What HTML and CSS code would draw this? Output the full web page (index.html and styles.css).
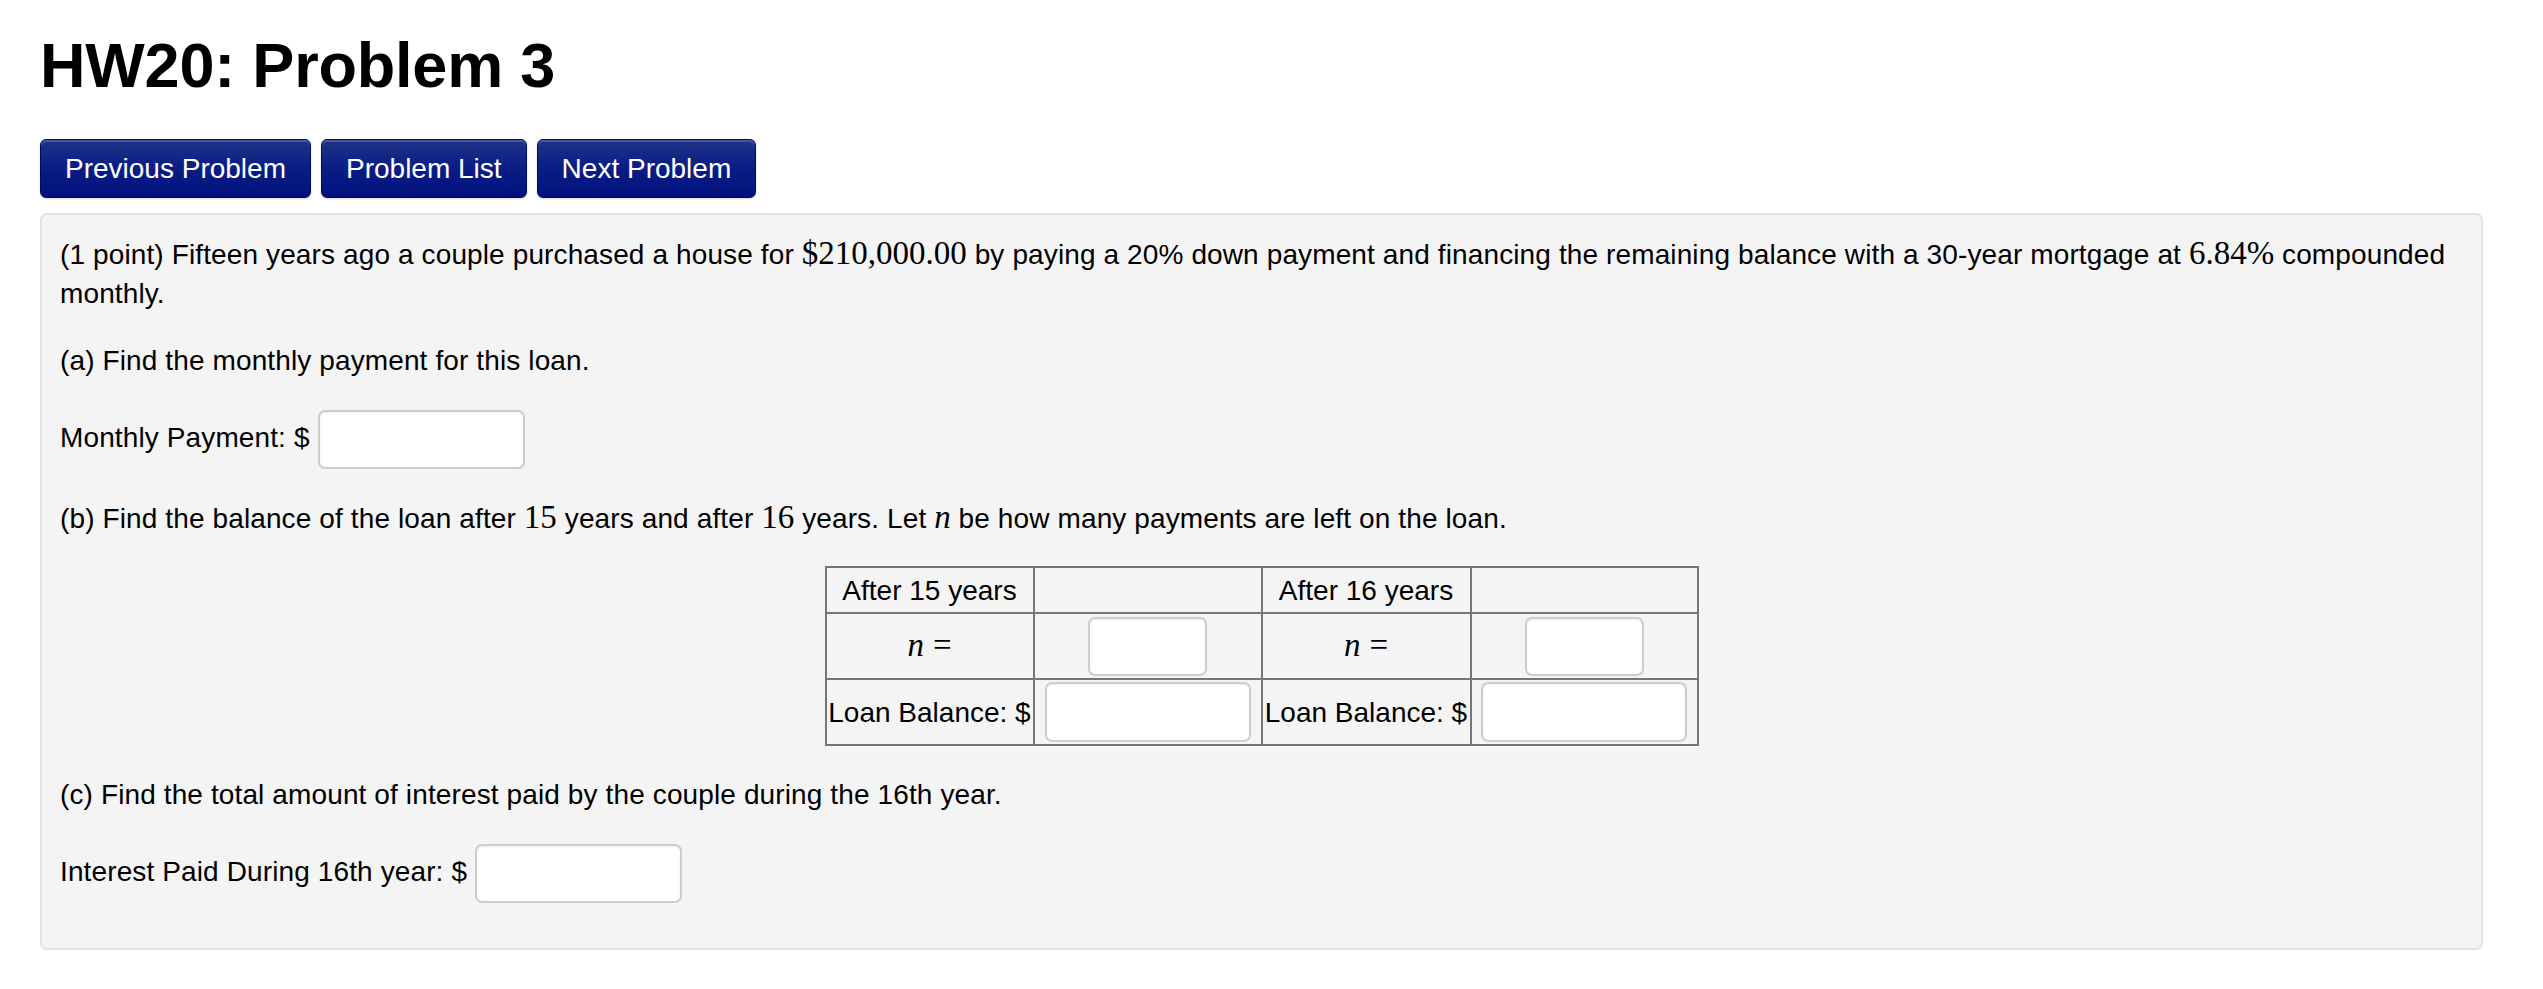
FILE: index.html
```html
<!DOCTYPE html>
<html lang="en">
<head>
<meta charset="utf-8">
<title>HW20: Problem 3</title>
<link rel="stylesheet" href="styles.css">
</head>
<body>
<div class="page">
  <h1 class="title">HW20: Problem 3</h1>
  <div class="nav">
    <a class="btn" href="#">Previous Problem</a>
    <a class="btn" href="#">Problem List</a>
    <a class="btn" href="#">Next Problem</a>
  </div>
  <div class="panel">
    <p>(1 point) Fifteen years ago a couple purchased a house for <span class="math">$210,000.00</span> by paying a 20% down payment and financing the remaining balance with a 30-year mortgage at <span class="math">6.84%</span> compounded monthly.</p>
    <p>(a) Find the monthly payment for this loan.</p>
    <p>Monthly Payment: $ <input class="ans" type="text"></p>
    <p>(b) Find the balance of the loan after <span class="math">15</span> years and after <span class="math">16</span> years. Let <span class="math"><i>n</i></span> be how many payments are left on the loan.</p>
    <table class="grid">
      <colgroup>
        <col class="c-label">
        <col class="c-input">
        <col class="c-label2">
        <col class="c-input2">
      </colgroup>
      <tr class="r-head">
        <td>After 15 years</td>
        <td></td>
        <td>After 16 years</td>
        <td></td>
      </tr>
      <tr class="r-n">
        <td><span class="math"><i>n</i><span class="eq">=</span></span></td>
        <td><input class="ans ans-small" type="text"></td>
        <td><span class="math"><i>n</i><span class="eq">=</span></span></td>
        <td><input class="ans ans-small" type="text"></td>
      </tr>
      <tr class="r-bal">
        <td>Loan Balance: $</td>
        <td><input class="ans" type="text"></td>
        <td>Loan Balance: $</td>
        <td><input class="ans" type="text"></td>
      </tr>
    </table>
    <p>(c) Find the total amount of interest paid by the couple during the 16th year.</p>
    <p>Interest Paid During 16th year: $ <input class="ans" type="text"></p>
  </div>
</div>
</body>
</html>
```
FILE: styles.css
```css
html, body {
  margin: 0;
  padding: 0;
  background: #ffffff;
}

body {
  font-family: "Liberation Sans", Arial, Helvetica, sans-serif;
  font-size: 28px;
  color: #000000;
}

.page {
  padding: 0 60px 0 40px;
}

.title {
  margin: 28px 0 0;
  font-size: 63px;
  line-height: 74px;
  font-weight: bold;
  letter-spacing: -0.2px;
}

.nav {
  display: flex;
  gap: 10px;
  margin-top: 37px;
}

.btn {
  display: flex;
  align-items: center;
  box-sizing: border-box;
  height: 59px;
  padding: 0 24px;
  border: 1px solid #000c6b;
  border-radius: 6px;
  background: linear-gradient(to bottom, #1f3388 0%, #0b1f84 45%, #00107e 100%);
  box-shadow: inset 0 2px 0 rgba(255, 255, 255, 0.18), 0 1px 2px rgba(0, 0, 0, 0.15);
  color: #ffffff;
  font-size: 28px;
  text-decoration: none;
  white-space: nowrap;
}

.panel {
  margin-top: 15px;
  box-sizing: border-box;
  border: 2px solid #e3e3e3;
  border-radius: 7px;
  background: #f4f4f4;
  padding: 20px 18px 15px;
  letter-spacing: 0.12px;
}

.panel p {
  margin: 0 0 28px;
  line-height: 39px;
}

.math {
  font-family: "Liberation Serif", "Times New Roman", serif;
  font-size: 33px;
  line-height: 1;
  letter-spacing: 0;
}

.math i {
  font-style: italic;
}

.eq {
  margin-left: 9px;
}

.ans {
  box-sizing: border-box;
  width: 207px;
  height: 59px;
  margin: 2px 0;
  padding: 0 8px;
  border: 2px solid #cdcdcd;
  border-radius: 7px;
  background: #ffffff;
  box-shadow: inset 0 1px 2px rgba(0, 0, 0, 0.08);
  vertical-align: middle;
  font-size: 28px;
  font-family: inherit;
}

.ans-small {
  width: 119px;
}

.grid {
  margin: 28px auto 29px;
  border-collapse: collapse;
  table-layout: fixed;
  width: 872px;
}

.c-label { width: 208px; }
.c-input { width: 228px; }
.c-label2 { width: 209px; }
.c-input2 { width: 227px; }

.grid td {
  border: 2px solid #767676;
  padding: 0 1px;
  text-align: center;
  white-space: nowrap;
  line-height: 39px;
  letter-spacing: 0;
}

.r-head td { height: 44px; }
.r-n td { height: 64px; }
.r-bal td { height: 64px; }

.r-bal td .ans {
  width: 206px;
  height: 60px;
}
```
